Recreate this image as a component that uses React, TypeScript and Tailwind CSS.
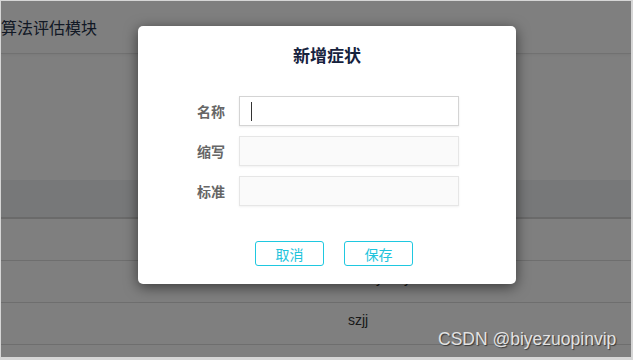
import React from "react";

const cjk = { fontFamily: '"Microsoft YaHei", "Noto Sans CJK SC", "Liberation Sans", sans-serif' };

type Row = { id: number; code: string };

const rows: Row[] = [
  { id: 1, code: "" },
  { id: 2, code: "xszcyzscy" },
  { id: 3, code: "szjj" },
  { id: 4, code: "" },
];

function Field({ label, focused }: { label: string; focused?: boolean }) {
  return (
    <div className="flex items-center pl-[57px]">
      <label className="w-[30px] text-right text-[14px] font-bold leading-[20px] text-[#666]">{label}</label>
      <div
        className={
          focused
            ? "ml-[14px] flex h-[30px] w-[220px] items-center border border-[#d4d4d4] bg-white pl-[11px] shadow-[0_1px_2px_rgba(0,0,0,0.08)]"
            : "ml-[14px] flex h-[30px] w-[220px] items-center border border-[#e6e6e6] bg-[#fafafa] pl-[11px] shadow-[0_1px_2px_rgba(0,0,0,0.06)]"
        }
      >
        {focused && <span className="h-[19px] w-px bg-[#333]" />}
        <input className="h-full min-w-0 flex-1 bg-transparent text-[14px] outline-none" />
      </div>
    </div>
  );
}

export default function App() {
  return (
    <div className="h-[360px] w-[633px] bg-[#d6d6d6] pb-[3px] pl-px pr-[2px] pt-px" style={cjk}>
      <div className="relative h-full w-full overflow-hidden bg-white">
        <header className="flex h-[53px] items-center border-b border-[#e2e2e2] shadow-[0_1px_3px_rgba(0,0,0,0.06)]">
          <h1 className="text-[16px] leading-[22px] text-[#24324a]">算法评估模块</h1>
        </header>

        <div className="mt-[126px]">
          <div className="h-[39px] border-b-2 border-[#d4d4d4] bg-[#eef0f3]" />
          {rows.map((row) => (
            <div className="grid h-[42px] grid-cols-[347px_1fr] items-start border-b border-[#dcdcdc] pt-[7px]" key={row.id}>
              <div />
              <div className="text-[14px] leading-[20px] text-[#333]" style={{ fontFamily: '"Liberation Sans", Arial, sans-serif' }}>
                {row.code}
              </div>
            </div>
          ))}
        </div>

        {/* mask */}
        <div className="absolute inset-0 bg-black/50" />

        <div className="absolute left-[137px] top-[25px] w-[378px] rounded-[5px] bg-white pb-[18px] pt-[17px] shadow-[0_3px_14px_rgba(0,0,0,0.55)]">
          <h2 className="text-center text-[17px] font-bold leading-[24px] text-[#16223d]">新增症状</h2>

          <div className="mt-[29px] flex flex-col gap-[10px]">
            <Field label="名称" focused />
            <Field label="缩写" />
            <Field label="标准" />
          </div>

          <div className="mt-[35px] flex gap-[20px] pl-[117px]">
            <button
              className="h-[25px] w-[69px] rounded-[3px] border border-[#1fc8e0] bg-white text-[14px] leading-[20px] text-[#22c3dc]"
              type="button"
            >
              取消
            </button>
            <button
              className="h-[25px] w-[69px] rounded-[3px] border border-[#1fc8e0] bg-white text-[14px] leading-[20px] text-[#22c3dc]"
              type="button"
            >
              保存
            </button>
          </div>
        </div>

        <div
          className="absolute left-[437px] top-[328px] text-[17.5px] leading-[20px] text-[#e2e2e2] [text-shadow:1px_1px_1px_rgba(0,0,0,0.55)]"
          style={{ fontFamily: '"Liberation Sans", Arial, sans-serif' }}
        >
          CSDN @biyezuopinvip
        </div>
      </div>
    </div>
  );
}
